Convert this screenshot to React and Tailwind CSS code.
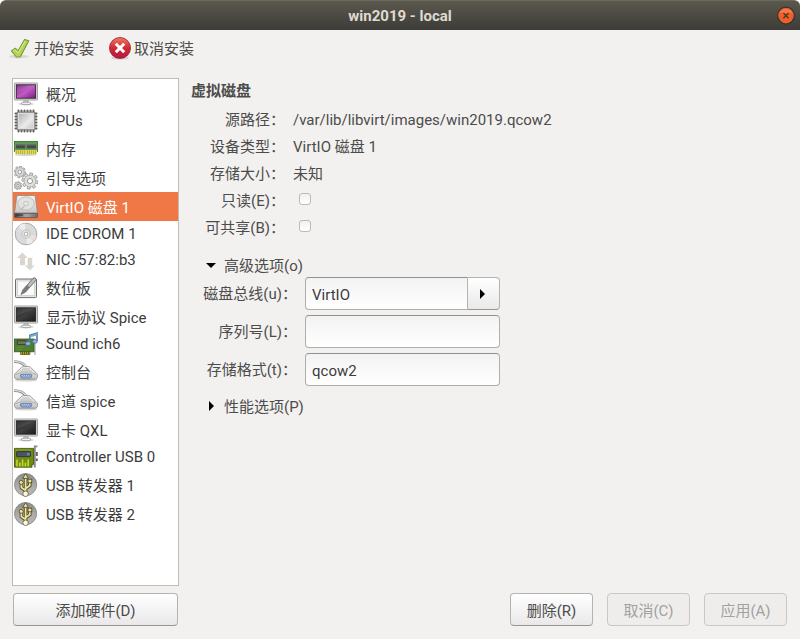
import React, { useState } from 'react';

const MonitorIcon = ({ screen, light, frame }) => (
  <svg className="w-6 h-6" viewBox="0 0 24 24">
    <defs>
      <linearGradient id={`screen-${screen.slice(1)}`} x1="0" y1="0" x2="1" y2="1">
        <stop offset="0" stopColor={screen} />
        <stop offset="0.5" stopColor={light} />
        <stop offset="1" stopColor={screen} />
      </linearGradient>
    </defs>
    <ellipse cx="12" cy="22" rx="8" ry="1.4" fill="#000" opacity="0.15" />
    <path d="M9.4 18h5.2l.4 3H9z" fill="#c6c6c6" />
    <ellipse cx="12" cy="21.4" rx="5" ry="1.3" fill="#f0f0f0" stroke="#8a8a88" strokeWidth="0.7" />
    <rect x="0.5" y="1" width="23" height="17" rx="0.6" fill={frame} stroke="#9a9a98" strokeWidth="0.9" />
    <rect x="2.3" y="2.8" width="19.4" height="13.4" fill={`url(#screen-${screen.slice(1)})`} stroke="#1d1d1d" strokeWidth="0.8" />
    <path d="M2.8 3.2h18.4L2.8 11z" fill="#fff" opacity="0.1" />
  </svg>
);

const CpuIcon = () => (
  <svg className="w-6 h-6" viewBox="0 0 24 24">
    <defs>
      <linearGradient id="cpu" x1="0" y1="0" x2="1" y2="1">
        <stop offset="0" stopColor="#b4b4b4" />
        <stop offset="0.6" stopColor="#eaeaea" />
        <stop offset="1" stopColor="#cacaca" />
      </linearGradient>
    </defs>
    <path
      d="M4.5 1.5v21M7.5 1.5v21M10.5 1.5v21M13.5 1.5v21M16.5 1.5v21M19.5 1.5v21M1.5 4.5h21M1.5 7.5h21M1.5 10.5h21M1.5 13.5h21M1.5 16.5h21M1.5 19.5h21"
      stroke="#5e5e5c"
      strokeWidth="2"
      strokeLinecap="round"
    />
    <rect x="3.2" y="3.2" width="17.6" height="17.6" rx="1.4" fill="#dededd" stroke="#6f6f6d" strokeWidth="0.8" />
    <rect x="5" y="5" width="14" height="14" rx="0.6" fill="url(#cpu)" />
  </svg>
);

const MemoryIcon = () => (
  <svg className="w-6 h-6" viewBox="0 0 24 24">
    <ellipse cx="12" cy="18" rx="11" ry="1.2" fill="#000" opacity="0.15" />
    <rect x="0.5" y="4.5" width="23" height="10" fill="#5f9a52" stroke="#35682c" strokeWidth="0.8" />
    <rect x="2" y="7" width="9.2" height="4.4" fill="#474b47" />
    <rect x="12.8" y="7" width="9.2" height="4.4" fill="#474b47" />
    <path d="M2 7.8h9.2M12.8 7.8h9.2" stroke="#868a86" strokeWidth="0.8" />
    <path d="M1 13h22v4.2H1z" fill="#e2d65c" />
    <path d="M2.5 13.4v4M4.5 13.4v4M6.5 13.4v4M8.5 13.4v4M10.5 13.4v4M13.5 13.4v4M15.5 13.4v4M17.5 13.4v4M19.5 13.4v4M21.5 13.4v4" stroke="#a8a23c" strokeWidth="0.7" />
  </svg>
);

const Gear = ({ cx, cy, r }) => (
  <g transform={`translate(${cx} ${cy})`}>
    {[0, 45, 90, 135].map((angle) => (
      <rect
        key={angle}
        x={-r * 0.18}
        y={-r}
        width={r * 0.36}
        height={r * 2}
        fill="#dcdcdb"
        stroke="#9a9a98"
        strokeWidth="0.8"
        transform={`rotate(${angle + 10})`}
      />
    ))}
    <circle r={r * 0.74} fill="#dededd" stroke="#a3a3a1" strokeWidth="0.7" />
    <circle r={r * 0.32} fill="#fff" stroke="#8f8f8d" strokeWidth="0.9" />
  </g>
);

const GearsIcon = () => (
  <svg className="w-6 h-6" viewBox="0 0 24 24">
    <Gear cx={5.8} cy={6} r={5.8} />
    <Gear cx={16} cy={15} r={8} />
    <Gear cx={3.9} cy={19.6} r={3.9} />
  </svg>
);

const DiskIcon = () => (
  <svg className="w-6 h-6" viewBox="0 0 24 24">
    <defs>
      <linearGradient id="disk" x1="0" y1="0" x2="0" y2="1">
        <stop offset="0" stopColor="#f2f2f2" />
        <stop offset="1" stopColor="#c8c8c6" />
      </linearGradient>
      <linearGradient id="diskFront" x1="0" y1="0" x2="1" y2="0">
        <stop offset="0" stopColor="#3f3f3f" />
        <stop offset="0.5" stopColor="#a7a7a7" />
        <stop offset="1" stopColor="#6b6b6b" />
      </linearGradient>
    </defs>
    <path d="M4 .5h16q1 0 1.2 1L23.5 18H.5L2.8 1.5Q3 .5 4 .5z" fill="url(#disk)" stroke="#8b8b89" strokeWidth="0.8" />
    <path d="M.5 18.4h23v3.2a1 1 0 0 1-1 1H1.5a1 1 0 0 1-1-1z" fill="url(#diskFront)" stroke="#4f4f4f" strokeWidth="0.7" />
    <ellipse cx="12" cy="8.4" rx="8.2" ry="6.6" fill="#e2e2e1" stroke="#b8b8b6" strokeWidth="0.8" />
    <ellipse cx="12" cy="8.6" rx="2.6" ry="1.8" fill="#ececeb" stroke="#b0b0ae" strokeWidth="0.7" />
    <path d="M6.6 15 10.6 10.8" stroke="#bdbdbb" strokeWidth="1.1" />
    <path d="M2 20h7" stroke="#2a2a2a" strokeWidth="1" />
  </svg>
);

const DiscIcon = () => (
  <svg className="w-6 h-6" viewBox="0 0 24 24">
    <circle cx="12" cy="12" r="10.8" fill="#dadad9" stroke="#a3a3a1" strokeWidth="0.9" />
    <path d="M12 12 4.4 4.4A10.3 10.3 0 0 1 11 1.6z" fill="#ededec" />
    <path d="M12 12 19.6 19.6A10.3 10.3 0 0 1 13 22.3z" fill="#eeebed" />
    <path d="M12 12 2 9.4A10.3 10.3 0 0 1 4.4 4.9z" fill="#dfdae8" />
    <path d="M12 12l10.2 1.6a10 10 0 0 1-2 5z" fill="#ecdfe2" />
    <circle cx="12" cy="12" r="4.2" fill="#e6e6e5" stroke="#b0b0ae" strokeWidth="0.7" />
    <circle cx="12" cy="12" r="1.9" fill="#fff" stroke="#999" strokeWidth="0.8" />
  </svg>
);

const NetworkIcon = () => (
  <svg className="w-6 h-6" viewBox="0 0 24 24" fill="#dad6cd">
    <path d="M8.4 4.4 13.8 10h-2.8v7.2H6V10H3z" />
    <path d="M16 22.8 10.4 17.2h3V9.4h5v7.8h2.8z" stroke="#fff" strokeWidth="0.6" />
  </svg>
);

const TabletIcon = () => (
  <svg className="w-6 h-6" viewBox="0 0 24 24">
    <rect x="1.5" y="3" width="21" height="18.6" rx="1" fill="#e4e4e3" stroke="#5f5f5d" strokeWidth="0.9" />
    <rect x="3.6" y="5" width="16.8" height="14.4" fill="#fafafa" stroke="#cfcfcd" strokeWidth="0.8" />
    <path d="M7 18.4 9 13.8 19 2.4a1.7 1.7 0 0 1 2.6 2.2L11.6 16z" fill="#bdbdbb" stroke="#585856" strokeWidth="0.8" />
    <path d="M7 18.4 9 13.8 13.4 8.8l2 2.6-3.8 4.6z" fill="#7a7a78" />
  </svg>
);

const SoundIcon = () => (
  <svg className="w-6 h-6" viewBox="0 0 24 24">
    <path d="M21 9v14" stroke="#c3c3c1" strokeWidth="1.6" />
    <rect x="0.5" y="7" width="19.5" height="12.8" fill="#4d8030" stroke="#34591d" strokeWidth="0.8" />
    <rect x="6.5" y="19.6" width="9.5" height="3" fill="#b9b02a" stroke="#4a4917" strokeWidth="0.6" />
    <path d="M8.4 19.6v3M10.4 19.6v3M12.4 19.6v3M14.4 19.6v3" stroke="#4a4917" strokeWidth="0.9" />
    <rect x="3.2" y="8.8" width="9" height="3.6" fill="#77705a" stroke="#353b2a" strokeWidth="0.8" />
    <path d="M2.6 15.2h7M2.6 17.6h5" stroke="#669647" strokeWidth="0.8" />
    <path d="M15.8 11V3.4L23 1.2V9" fill="none" stroke="#4c7aa8" strokeWidth="1.6" />
    <path d="M15.6 4.6 23.2 2.2" stroke="#7fa8cc" strokeWidth="2" />
    <ellipse cx="14" cy="11.6" rx="2.5" ry="2" fill="#8fb5d6" stroke="#41709d" strokeWidth="0.8" />
    <ellipse cx="20.8" cy="9.4" rx="2.4" ry="1.9" fill="#8fb5d6" stroke="#41709d" strokeWidth="0.8" />
  </svg>
);

const SerialIcon = () => (
  <svg className="w-6 h-6" viewBox="0 0 24 24">
    <defs>
      <linearGradient id="serial" x1="0" y1="0" x2="0" y2="1">
        <stop offset="0" stopColor="#f4f4f3" />
        <stop offset="1" stopColor="#c4c4c2" />
      </linearGradient>
    </defs>
    <ellipse cx="12" cy="20.2" rx="11.4" ry="1.4" fill="#000" opacity="0.16" />
    <path d="M0 1.6c6 0 10.4 2 12.6 6.4" fill="none" stroke="#8b8b89" strokeWidth="2.8" />
    <path d="M0 1.4c6 0 10.4 2 12.6 6.4" fill="none" stroke="#dadad8" strokeWidth="1.4" />
    <path d="M9.2 6.6h5.8q1 0 1.6.8l5.2 5c1.3 1.2 1.8 2.3 1.7 4-.1 1.8-.9 2.8-2.2 2.8H2.7c-1.3 0-2.1-1-2.2-2.8-.1-1.7.4-2.8 1.7-4l5.4-5q.7-.8 1.6-.8z" fill="url(#serial)" stroke="#868684" strokeWidth="0.8" />
    <path d="M8.2 9h7.6M6.2 11h11.6" stroke="#aeaeac" strokeWidth="0.8" />
    <path d="M1.8 15c2-2 5-2.2 10.2-2.2s8.2.2 10.2 2.2" fill="none" stroke="#9b9b99" strokeWidth="0.7" />
    <path d="M7.4 14.4h9.4c.8 0 1.2.5 1 1.2l-.4 1.4c-.2.7-.6 1-1.3 1H8.1c-.7 0-1.1-.3-1.3-1l-.4-1.4c-.2-.7.2-1.2 1-1.2z" fill="#7ba1d4" stroke="#56709a" strokeWidth="0.7" />
    <path d="M8 15.6h8.4M8.6 17h7" stroke="#d3e1f5" strokeWidth="0.7" strokeDasharray="1 1" />
  </svg>
);

const ControllerIcon = () => (
  <svg className="w-6 h-6" viewBox="0 0 24 24">
    <path d="M23.4 1.4h-2.6v21.2" fill="none" stroke="#8b8b89" strokeWidth="1.9" />
    <path d="M22.8 7v4M22.8 13.4v2.6" stroke="#666" strokeWidth="2" />
    <path d="M.5 3.4h19v16H18v2.8H.5z" fill="#6f8a17" stroke="#4a590e" strokeWidth="0.9" />
    <rect x="2.6" y="6.6" width="13.8" height="5" rx="0.6" fill="#4d5361" stroke="#272b33" strokeWidth="0.8" />
    <rect x="12.8" y="7.8" width="3" height="2.6" fill="#5c86be" />
    <path d="M3 21.6v-7M5.8 21.6v-4M8.6 21.6v-7M11.4 21.6v-4M14.2 21.6v-7" stroke="#c4da2a" strokeWidth="1.6" />
    <path d="M1.6 5h16" stroke="#94ab34" strokeWidth="0.8" />
  </svg>
);

const UsbIcon = () => (
  <svg className="w-6 h-6" viewBox="0 0 24 24">
    <defs>
      <linearGradient id="usb" x1="0" y1="0" x2="0" y2="1">
        <stop offset="0" stopColor="#8a8a88" />
        <stop offset="0.5" stopColor="#a9a9a7" />
        <stop offset="1" stopColor="#b9b9b7" />
      </linearGradient>
    </defs>
    <circle cx="11.6" cy="11.6" r="11.1" fill="url(#usb)" stroke="#858583" strokeWidth="0.8" />
    <g stroke="#45432c" strokeWidth="3.4" fill="none">
      <path d="M11.6 20V3.5M11.6 17.6l-4.2-3V9M11.6 15.6l4.2-3V8" />
    </g>
    <g stroke="#f0e596" strokeWidth="1.8" fill="none">
      <path d="M11.6 20V3.5M11.6 17.6l-4.2-3V9M11.6 15.6l4.2-3V8" />
    </g>
    <path d="M11.6.6 14.4 5.4H8.8z" fill="#f0e596" stroke="#45432c" strokeWidth="0.8" />
    <circle cx="7.2" cy="9.4" r="2" fill="#f0e596" stroke="#45432c" strokeWidth="0.8" />
    <rect x="14" y="6.2" width="3.8" height="3.6" fill="#f0e596" stroke="#45432c" strokeWidth="0.8" />
    <circle cx="11.6" cy="20.8" r="2.8" fill="#fdf8d8" stroke="#45432c" strokeWidth="0.7" />
  </svg>
);

const CheckIcon = () => (
  <svg className="w-6 h-6" viewBox="0 0 24 24">
    <ellipse cx="11" cy="20.6" rx="10" ry="1.8" fill="#000" opacity="0.1" />
    <path d="M3.4 15 7.4 12.2 10 15 16.6 3.4 20.8 4.8 12.4 20.8 8.4 21z" fill="#b4d455" stroke="#7a9a35" strokeWidth="1.1" strokeLinejoin="round" />
    <path d="M5 15.2 7.2 13.8l3 3L17.2 5" fill="none" stroke="#dcef98" strokeWidth="1" />
  </svg>
);

const CancelIcon = () => (
  <svg className="w-6 h-6" viewBox="0 0 24 24">
    <defs>
      <linearGradient id="cancel" x1="0" y1="0" x2="0" y2="1">
        <stop offset="0" stopColor="#ee7a68" />
        <stop offset="0.5" stopColor="#d22a32" />
        <stop offset="1" stopColor="#b0164a" />
      </linearGradient>
    </defs>
    <ellipse cx="12" cy="22" rx="9" ry="1.6" fill="#000" opacity="0.14" />
    <circle cx="12" cy="12" r="10.5" fill="url(#cancel)" stroke="#a5262a" strokeWidth="0.9" />
    <path d="M7.8 7.8 16.2 16.2M16.2 7.8 7.8 16.2" stroke="#fff" strokeWidth="3" />
  </svg>
);

const Arrow = ({ open }) => (
  <svg className="w-3 h-3" viewBox="0 0 12 12">
    {open ? <path d="M1 3h10L6 8z" /> : <path d="M4 1l5 5-5 5z" />}
  </svg>
);

const darkMonitor = <MonitorIcon screen="#1b1c1b" light="#3d3f3e" frame="#dededc" />;

// rows whose label holds Chinese text are a little taller
const hardware = [
  { name: '概况', icon: <MonitorIcon screen="#7a1a80" light="#c05cc4" frame="#dcdcda" />, tall: true },
  { name: 'CPUs', icon: <CpuIcon /> },
  { name: '内存', icon: <MemoryIcon />, tall: true },
  { name: '引导选项', icon: <GearsIcon />, tall: true },
  { name: 'VirtIO 磁盘 1', icon: <DiskIcon />, tall: true },
  { name: 'IDE CDROM 1', icon: <DiscIcon /> },
  { name: 'NIC :57:82:b3', icon: <NetworkIcon /> },
  { name: '数位板', icon: <TabletIcon />, tall: true },
  { name: '显示协议 Spice', icon: darkMonitor, tall: true },
  { name: 'Sound ich6', icon: <SoundIcon /> },
  { name: '控制台', icon: <SerialIcon />, tall: true },
  { name: '信道 spice', icon: <SerialIcon />, tall: true },
  { name: '显卡 QXL', icon: darkMonitor, tall: true },
  { name: 'Controller USB 0', icon: <ControllerIcon /> },
  { name: 'USB 转发器 1', icon: <UsbIcon />, tall: true },
  { name: 'USB 转发器 2', icon: <UsbIcon />, tall: true }
];

const details = [
  { label: '源路径：', value: '/var/lib/libvirt/images/win2019.qcow2' },
  { label: '设备类型：', value: 'VirtIO 磁盘 1' },
  { label: '存储大小：', value: '未知' }
];

const buttonStyle =
  'h-[33px] rounded-[4px] border border-[#b5b3b0] border-b-[#979592] bg-linear-to-b from-white to-[#eae8e8] disabled:border-[#c9c8c6] disabled:bg-none disabled:bg-[#eeedec] disabled:text-[#a3a19e]';
const entryStyle =
  'w-full h-[33px] rounded-[4px] border border-[#b0aeab] border-t-[#93918e] bg-linear-to-b from-[#f3f3f3] to-white px-1.5 pt-0.5 text-[#3c3c3c] outline-none';
const checkStyle =
  'appearance-none ml-1.5 mb-1 w-3 h-3 rounded-[3px] border border-[#bcbab7] bg-linear-to-b from-[#f0f0f0] to-white';

const App = () => {
  const [selected, setSelected] = useState('VirtIO 磁盘 1');
  const [showAdvanced, setShowAdvanced] = useState(true);
  const [showTuning, setShowTuning] = useState(false);

  return (
    <div className="min-h-screen flex flex-col bg-white text-[15px] leading-[22px] text-[#4c4c4c] font-['Roboto','Noto_Sans_CJK_SC',sans-serif]">
      {/* Title bar */}
      <header className="h-[30px] flex items-center rounded-t-[6px] border-t border-[#6a675c] bg-linear-to-b from-[#5b584d] to-[#3d3c38] px-1">
        <span className="w-5"></span>
        <h1 className="flex-1 text-center font-bold text-[#dfdbd2]">win2019 - local</h1>
        <button aria-label="关闭" className="w-5 h-5">
          <svg className="w-5 h-5" viewBox="0 0 20 20">
            <circle cx="10" cy="9.6" r="8.4" fill="#ee5f2e" stroke="#35332e" strokeWidth="1.2" />
            <path d="M3.4 7a7.4 7.4 0 0 1 13.2 0z" fill="#f58a63" opacity="0.6" />
            <path d="M7.4 7 12.6 12.2M12.6 7 7.4 12.2" stroke="#4a3a1c" strokeWidth="1.3" />
          </svg>
        </button>
      </header>

      <div className="flex-1 flex flex-col bg-[#f2f1ef]">
        {/* Toolbar */}
        <div className="h-9 flex items-center gap-3.5 px-2">
          <button className="flex items-center gap-0.5">
            <CheckIcon />
            <span className="pt-0.5">开始安装</span>
          </button>
          <button className="flex items-center gap-0.5">
            <CancelIcon />
            <span className="pt-0.5">取消安装</span>
          </button>
        </div>

        <div className="flex-1 flex gap-3 px-3 pt-3">
          {/* Hardware list */}
          <nav className="w-[167px] flex flex-col border border-[#bfbbb5] bg-white text-[#3c3c3c]">
            {hardware.map((item) => (
              <button
                key={item.name}
                onClick={() => setSelected(item.name)}
                className={`${item.tall ? 'h-[29px]' : 'h-[26px]'} ${item.name === selected ? 'bg-[#f07746] text-white' : ''} flex items-center gap-2 pl-px text-left whitespace-nowrap`}
              >
                {item.icon}
                <span className={item.tall ? 'pt-0.5' : ''}>{item.name}</span>
              </button>
            ))}
          </nav>

          {/* Disk details */}
          <main className="flex-1">
            <h2 className="h-7 leading-[26px] font-bold">虚拟磁盘</h2>
            <div className="grid grid-cols-[94px_1fr] auto-rows-[27px] items-center gap-x-2">
              {details.map((row) => (
                <React.Fragment key={row.label}>
                  <span className="text-right">{row.label}</span>
                  <span>{row.value}</span>
                </React.Fragment>
              ))}
              <label htmlFor="readonly" className="text-right">只读(E)：</label>
              <input id="readonly" type="checkbox" className={checkStyle} />
              <label htmlFor="shareable" className="text-right">可共享(B)：</label>
              <input id="shareable" type="checkbox" className={checkStyle} />
            </div>

            <button
              aria-expanded={showAdvanced}
              onClick={() => setShowAdvanced(!showAdvanced)}
              className="mt-3.5 ml-3.5 flex items-center gap-[7px]"
            >
              <Arrow open={showAdvanced} />
              高级选项(o)
            </button>
            {showAdvanced && (
              <div className="grid grid-cols-[106px_195px] items-center gap-x-2 gap-y-[5px]">
                <label htmlFor="bus" className="text-right">磁盘总线(u)：</label>
                <div className="flex">
                  <input id="bus" defaultValue="VirtIO" className={`${entryStyle} rounded-r-none border-r-0`} />
                  <button aria-label="选择磁盘总线" className={`${buttonStyle} w-[33px] shrink-0 rounded-l-none flex items-center pl-2`}>
                    <Arrow />
                  </button>
                </div>
                <label htmlFor="serial" className="text-right">序列号(L)：</label>
                <input id="serial" className={entryStyle} />
                <label htmlFor="format" className="text-right">存储格式(t)：</label>
                <input id="format" defaultValue="qcow2" className={entryStyle} />
              </div>
            )}
            <button
              aria-expanded={showTuning}
              onClick={() => setShowTuning(!showTuning)}
              className="mt-2 ml-3.5 flex items-center gap-[7px]"
            >
              <Arrow open={showTuning} />
              <span className="pt-0.5">性能选项(P)</span>
            </button>
          </main>
        </div>

        {/* Bottom buttons */}
        <footer className="flex gap-3.5 px-[13px] pt-[7px] pb-[13px]">
          <button className={`${buttonStyle} w-[165px] mr-auto pt-0.5`}>添加硬件(D)</button>
          <button className={`${buttonStyle} w-[83px] pt-0.5`}>删除(R)</button>
          <button className={`${buttonStyle} w-[83px] pt-0.5`} disabled>取消(C)</button>
          <button className={`${buttonStyle} w-[83px] pt-0.5`} disabled>应用(A)</button>
        </footer>
      </div>
    </div>
  );
};

export default App;
